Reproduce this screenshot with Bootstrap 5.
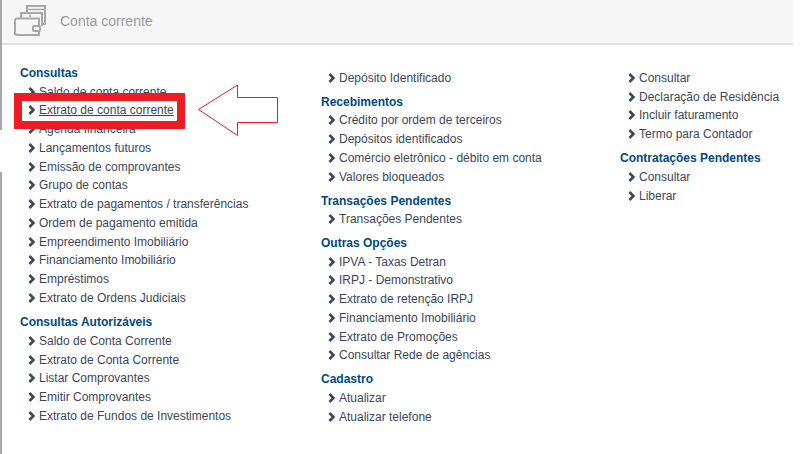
<!DOCTYPE html>
<html lang="pt-BR">
<head>
<meta charset="utf-8">
<link href="https://cdn.jsdelivr.net/npm/bootstrap@5.3.0/dist/css/bootstrap.min.css" rel="stylesheet">
<style>
html,body{height:454px;overflow:hidden;background:#fff}
body{font-family:"Liberation Sans",Arial,sans-serif;font-size:12px;color:#3c4757;width:806px}
.shell{width:793px;height:454px;border-left:2px solid #a8a8a8;position:relative}
.top-bar{height:45px;background:#f7f7f7;border-bottom:2px solid #e0e0e0;padding-left:12px;gap:12px}
.top-title{font-size:14px;color:#9a9a9a}
.cols{padding-top:18.5px}
.col-a{width:300px;padding-left:18px}
.col-b{width:300px;padding-left:19px;padding-top:5px}
.col-b .menu-item{padding-left:7px}
.col-c{padding-left:18px;padding-top:5px}
.group-title{font-weight:700;color:#004a7c;line-height:19px;height:18.75px;margin-top:5.4px;white-space:nowrap}
.col-a .group-title{margin-top:5.6px}
.col-b .group-title{height:18.25px;margin-top:5.5px}
.group-title:first-child,.col-a .group-title:first-child{margin-top:0}
.menu-item{display:flex;align-items:center;height:18.75px;padding-left:8px;color:#3c4757;text-decoration:none;white-space:nowrap;gap:3px}
.menu-item svg{flex:none}
.menu-item.current span{text-decoration:underline}
.hilite{position:absolute;left:12px;top:93px;width:171px;height:36px;border:8px solid #ed1c24;pointer-events:none}
.pointer{position:absolute;left:193px;top:83px}
.edge-gap{position:absolute;left:-2px;top:130px;width:2px;height:42px;background:#fff}
</style>
</head>
<body>
<svg width="0" height="0" class="d-block position-absolute"><symbol id="chev" viewBox="0 0 8 10"><path d="M1.4 1 5.4 5 1.4 9" fill="none" stroke="#3c4757" stroke-width="2.6"/></symbol></svg>
<div class="shell">
  <div class="top-bar d-flex align-items-center">
    <svg width="34" height="34" viewBox="0 0 34 34" fill="none" stroke="#a8a8a8" stroke-width="2"><path d="M13 8V1H31V19H28"/><path d="M13 4.500H31" stroke-width="1.500"/><path d="M7 13V8H28V21"/><path d="M16 9.500V12" stroke-width="1.500"/><path d="M3 13.500H25V30H3A2 2 0 0 1 1 28V15.500A2 2 0 0 1 3 13.500Z" fill="#f7f7f7"/><rect x="19" y="21" width="7" height="5" rx="1" fill="#f7f7f7"/></svg>
    <span class="top-title">Conta corrente</span>
  </div>
  <div class="cols d-flex">
    <div class="col-a">
      <div class="group-title">Consultas</div>
      <a class="menu-item" href="#"><svg width="8" height="10"><use href="#chev"/></svg><span>Saldo de conta corrente</span></a>
      <a class="menu-item current" href="#"><svg width="8" height="10"><use href="#chev"/></svg><span>Extrato de conta corrente</span></a>
      <a class="menu-item" href="#"><svg width="8" height="10"><use href="#chev"/></svg><span>Agenda financeira</span></a>
      <a class="menu-item" href="#"><svg width="8" height="10"><use href="#chev"/></svg><span>Lançamentos futuros</span></a>
      <a class="menu-item" href="#"><svg width="8" height="10"><use href="#chev"/></svg><span>Emissão de comprovantes</span></a>
      <a class="menu-item" href="#"><svg width="8" height="10"><use href="#chev"/></svg><span>Grupo de contas</span></a>
      <a class="menu-item" href="#"><svg width="8" height="10"><use href="#chev"/></svg><span>Extrato de pagamentos / transferências</span></a>
      <a class="menu-item" href="#"><svg width="8" height="10"><use href="#chev"/></svg><span>Ordem de pagamento emitida</span></a>
      <a class="menu-item" href="#"><svg width="8" height="10"><use href="#chev"/></svg><span>Empreendimento Imobiliário</span></a>
      <a class="menu-item" href="#"><svg width="8" height="10"><use href="#chev"/></svg><span>Financiamento Imobiliário</span></a>
      <a class="menu-item" href="#"><svg width="8" height="10"><use href="#chev"/></svg><span>Empréstimos</span></a>
      <a class="menu-item" href="#"><svg width="8" height="10"><use href="#chev"/></svg><span>Extrato de Ordens Judiciais</span></a>
      <div class="group-title">Consultas Autorizáveis</div>
      <a class="menu-item" href="#"><svg width="8" height="10"><use href="#chev"/></svg><span>Saldo de Conta Corrente</span></a>
      <a class="menu-item" href="#"><svg width="8" height="10"><use href="#chev"/></svg><span>Extrato de Conta Corrente</span></a>
      <a class="menu-item" href="#"><svg width="8" height="10"><use href="#chev"/></svg><span>Listar Comprovantes</span></a>
      <a class="menu-item" href="#"><svg width="8" height="10"><use href="#chev"/></svg><span>Emitir Comprovantes</span></a>
      <a class="menu-item" href="#"><svg width="8" height="10"><use href="#chev"/></svg><span>Extrato de Fundos de Investimentos</span></a>
    </div>
    <div class="col-b">
      <a class="menu-item" href="#"><svg width="8" height="10"><use href="#chev"/></svg><span>Depósito Identificado</span></a>
      <div class="group-title">Recebimentos</div>
      <a class="menu-item" href="#"><svg width="8" height="10"><use href="#chev"/></svg><span>Crédito por ordem de terceiros</span></a>
      <a class="menu-item" href="#"><svg width="8" height="10"><use href="#chev"/></svg><span>Depósitos identificados</span></a>
      <a class="menu-item" href="#"><svg width="8" height="10"><use href="#chev"/></svg><span>Comércio eletrônico - débito em conta</span></a>
      <a class="menu-item" href="#"><svg width="8" height="10"><use href="#chev"/></svg><span>Valores bloqueados</span></a>
      <div class="group-title">Transações Pendentes</div>
      <a class="menu-item" href="#"><svg width="8" height="10"><use href="#chev"/></svg><span>Transações Pendentes</span></a>
      <div class="group-title">Outras Opções</div>
      <a class="menu-item" href="#"><svg width="8" height="10"><use href="#chev"/></svg><span>IPVA - Taxas Detran</span></a>
      <a class="menu-item" href="#"><svg width="8" height="10"><use href="#chev"/></svg><span>IRPJ - Demonstrativo</span></a>
      <a class="menu-item" href="#"><svg width="8" height="10"><use href="#chev"/></svg><span>Extrato de retenção IRPJ</span></a>
      <a class="menu-item" href="#"><svg width="8" height="10"><use href="#chev"/></svg><span>Financiamento Imobiliário</span></a>
      <a class="menu-item" href="#"><svg width="8" height="10"><use href="#chev"/></svg><span>Extrato de Promoções</span></a>
      <a class="menu-item" href="#"><svg width="8" height="10"><use href="#chev"/></svg><span>Consultar Rede de agências</span></a>
      <div class="group-title">Cadastro</div>
      <a class="menu-item" href="#"><svg width="8" height="10"><use href="#chev"/></svg><span>Atualizar</span></a>
      <a class="menu-item" href="#"><svg width="8" height="10"><use href="#chev"/></svg><span>Atualizar telefone</span></a>
    </div>
    <div class="col-c">
      <a class="menu-item" href="#"><svg width="8" height="10"><use href="#chev"/></svg><span>Consultar</span></a>
      <a class="menu-item" href="#"><svg width="8" height="10"><use href="#chev"/></svg><span>Declaração de Residência</span></a>
      <a class="menu-item" href="#"><svg width="8" height="10"><use href="#chev"/></svg><span>Incluir faturamento</span></a>
      <a class="menu-item" href="#"><svg width="8" height="10"><use href="#chev"/></svg><span>Termo para Contador</span></a>
      <div class="group-title">Contratações Pendentes</div>
      <a class="menu-item" href="#"><svg width="8" height="10"><use href="#chev"/></svg><span>Consultar</span></a>
      <a class="menu-item" href="#"><svg width="8" height="10"><use href="#chev"/></svg><span>Liberar</span></a>
    </div>
  </div>
  <div class="hilite"></div>
  <div class="edge-gap"></div>
  <svg class="pointer" width="90" height="60" viewBox="195 83 90 60" fill="#fff" stroke="#ed1c24" stroke-width="1"><path d="M198.500 109.500 237.500 85V97.500H277.500V122.500H237.500V135.500Z"/></svg>
</div>
</body>
</html>
